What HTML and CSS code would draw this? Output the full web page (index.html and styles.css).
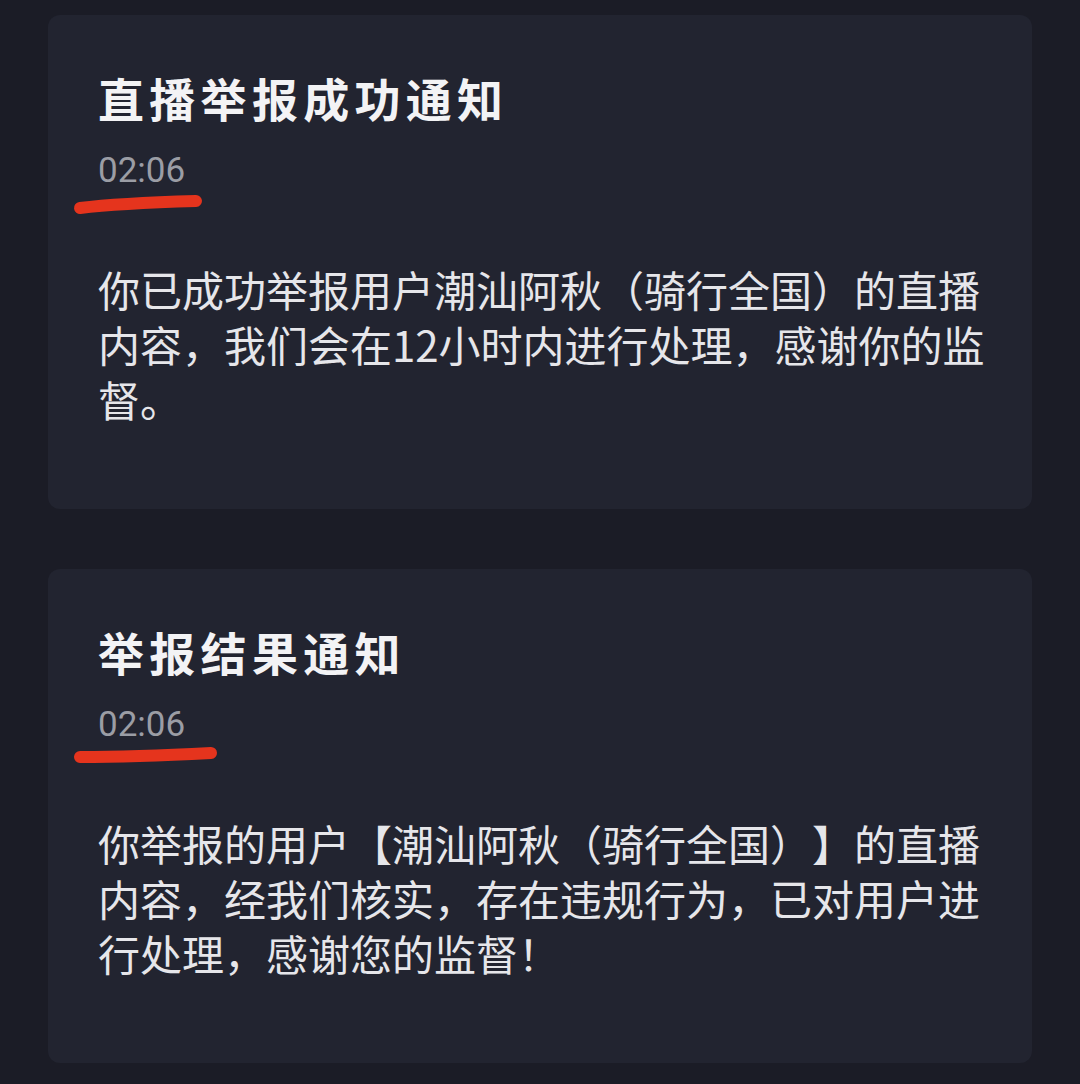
FILE: index.html
```html
<!DOCTYPE html>
<html>
<head>
  <meta charset="utf-8">
  <title>通知</title>
  <link rel="stylesheet" href="styles.css">
</head>
<body>
  <div class="list">
    <div class="card">
      <h2 class="card-title">直播举报成功通知</h2>
      <div class="time">
        02:06
        <svg class="mark" width="150" height="30" viewBox="0 0 150 30">
          <path d="M8 18 C40 14 90 12 124 11" />
        </svg>
      </div>
      <p class="card-text">你已成功举报用户潮汕阿秋（骑行全国）的直播内容，我们会在12小时内进行处理，感谢你的监督。</p>
    </div>
    <div class="card">
      <h2 class="card-title">举报结果通知</h2>
      <div class="time">
        02:06
        <svg class="mark mark-long" width="170" height="30" viewBox="0 0 170 30">
          <path d="M8 16 C50 16 100 14 139 12" />
        </svg>
      </div>
      <p class="card-text">你举报的用户【潮汕阿秋（骑行全国）】的直播内容，经我们核实，存在违规行为，已对用户进行处理，感谢您的监督！</p>
    </div>
  </div>
</body>
</html>
```

FILE: styles.css
```css
body {
    margin: 0;
    background-color: #1b1c26;
    font-family: "Noto Sans CJK SC", "Noto Sans", sans-serif;
}
.list {
    display: flex;
    flex-direction: column;
    gap: 60px;
    padding: 15px 48px 0 48px;
}
.card {
    background-color: #222430;
    border-radius: 12px;
    padding: 52px 44px 83px 50px;
}
.card-title {
    margin: 0;
    font-size: 46px;
    line-height: 60px;
    letter-spacing: 5.3px;
    font-weight: 700;
    color: #f3f3f5;
}
.time {
    position: relative;
    margin-top: 24px;
    font-family: Roboto, sans-serif;
    font-size: 35px;
    line-height: 40px;
    color: #9b9da5;
}
.mark {
    position: absolute;
    left: -26px;
    top: 39px;
}
.mark-long { top: 36px; }
.mark path {
    fill: none;
    stroke: #e5341d;
    stroke-width: 12;
    stroke-linecap: round;
}
.card-text {
    margin: 70px 0 0 0;
    font-size: 42px;
    line-height: 55px;
    color: #e6e6ea;
    text-spacing-trim: space-all;
}
```
